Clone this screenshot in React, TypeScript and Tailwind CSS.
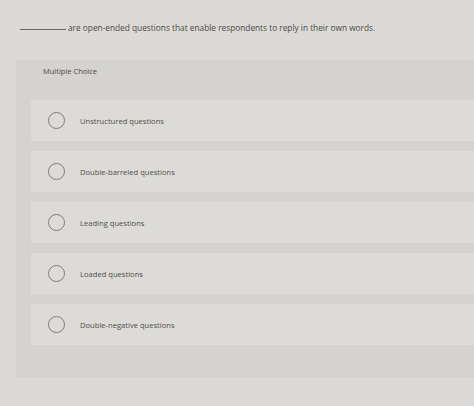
const options = [
  'Unstructured questions',
  'Double-barreled questions',
  'Leading questions',
  'Loaded questions',
  'Double-negative questions',
]

export default function App() {
  return (
    <div
      className="w-[474px] h-[406px] overflow-hidden bg-[#dcdad6] text-[#5a5857]"
      style={{ fontFamily: '"Open Sans", "Liberation Sans", sans-serif' }}
    >
      <div className="flex items-end h-[34px] pl-[20px] pb-[1px]">
        <span className="inline-block w-[46px] border-b border-[#6a6866] mb-[3px]" />
        <span className="ml-[2px] text-[8.3px] leading-[10px] text-[#4a4846]">
          are open-ended questions that enable respondents to reply in their own words.
        </span>
      </div>

      <div className="mt-[26px] ml-[16px] h-[318px] bg-[#d5d3cf] flex flex-col">
        <div className="h-[40px] pl-[27px] pt-[6px] text-[7.5px] leading-[10px] text-[#4a4846]">
          Multiple Choice
        </div>
        <div className="flex flex-col gap-[10px]">
          {options.map((label) => (
            <div
              key={label}
              className="ml-[15px] h-[41px] bg-[#dddbd7] flex items-center pl-[17px]"
            >
              <span className="w-[17px] h-[17px] rounded-full border border-[#7e7c79] shrink-0" />
              <span className="ml-[15px] text-[7.6px] leading-[10px] text-[#504e4b]">
                {label}
              </span>
            </div>
          ))}
        </div>
      </div>
    </div>
  )
}
